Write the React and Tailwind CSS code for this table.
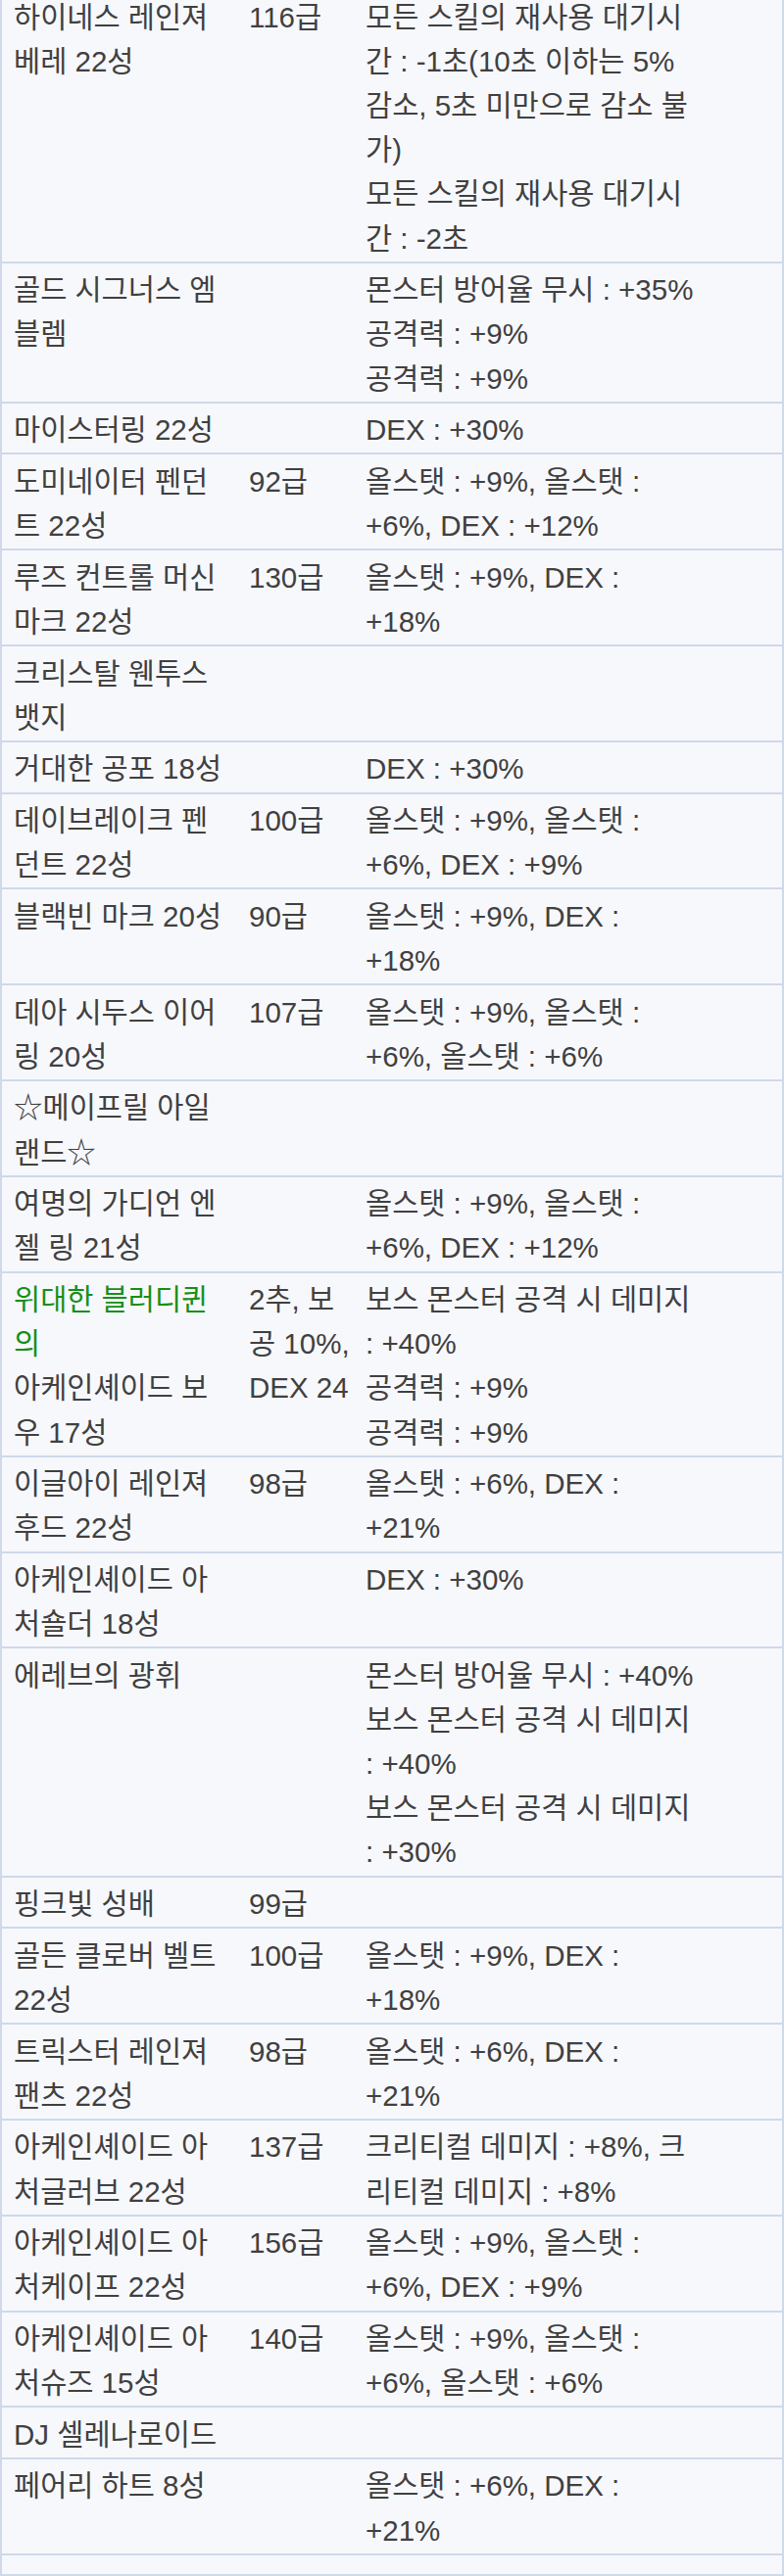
import React from 'react';

// 장비 목록: 이름 / 추옵(급) / 잠재·에디 옵션 (줄 단위)
const items = [
  {
    name: ['하이네스 레인져', '베레 22성'],
    grade: ['116급'],
    opts: ['모든 스킬의 재사용 대기시', '간 : -1초(10초 이하는 5%', '감소, 5초 미만으로 감소 불', '가)', '모든 스킬의 재사용 대기시', '간 : -2초'],
  },
  { name: ['골드 시그너스 엠', '블렘'], opts: ['몬스터 방어율 무시 : +35%', '공격력 : +9%', '공격력 : +9%'] },
  { name: ['마이스터링 22성'], opts: ['DEX : +30%'] },
  { name: ['도미네이터 펜던', '트 22성'], grade: ['92급'], opts: ['올스탯 : +9%, 올스탯 :', '+6%, DEX : +12%'] },
  { name: ['루즈 컨트롤 머신', '마크 22성'], grade: ['130급'], opts: ['올스탯 : +9%, DEX :', '+18%'] },
  { name: ['크리스탈 웬투스', '뱃지'] },
  { name: ['거대한 공포 18성'], opts: ['DEX : +30%'] },
  { name: ['데이브레이크 펜', '던트 22성'], grade: ['100급'], opts: ['올스탯 : +9%, 올스탯 :', '+6%, DEX : +9%'] },
  { name: ['블랙빈 마크 20성'], grade: ['90급'], opts: ['올스탯 : +9%, DEX :', '+18%'] },
  { name: ['데아 시두스 이어', '링 20성'], grade: ['107급'], opts: ['올스탯 : +9%, 올스탯 :', '+6%, 올스탯 : +6%'] },
  { name: ['☆메이프릴 아일', '랜드☆'] },
  { name: ['여명의 가디언 엔', '젤 링 21성'], opts: ['올스탯 : +9%, 올스탯 :', '+6%, DEX : +12%'] },
  {
    name: ['위대한 블러디퀸', '의', '아케인셰이드 보', '우 17성'],
    green: 2,
    grade: ['2추, 보', '공 10%,', 'DEX 24'],
    opts: ['보스 몬스터 공격 시 데미지', ': +40%', '공격력 : +9%', '공격력 : +9%'],
  },
  { name: ['이글아이 레인져', '후드 22성'], grade: ['98급'], opts: ['올스탯 : +6%, DEX :', '+21%'] },
  { name: ['아케인셰이드 아', '처숄더 18성'], opts: ['DEX : +30%'] },
  {
    name: ['에레브의 광휘'],
    opts: ['몬스터 방어율 무시 : +40%', '보스 몬스터 공격 시 데미지', ': +40%', '보스 몬스터 공격 시 데미지', ': +30%'],
  },
  { name: ['핑크빛 성배'], grade: ['99급'] },
  { name: ['골든 클로버 벨트', '22성'], grade: ['100급'], opts: ['올스탯 : +9%, DEX :', '+18%'] },
  { name: ['트릭스터 레인져', '팬츠 22성'], grade: ['98급'], opts: ['올스탯 : +6%, DEX :', '+21%'] },
  { name: ['아케인셰이드 아', '처글러브 22성'], grade: ['137급'], opts: ['크리티컬 데미지 : +8%, 크', '리티컬 데미지 : +8%'] },
  { name: ['아케인셰이드 아', '처케이프 22성'], grade: ['156급'], opts: ['올스탯 : +9%, 올스탯 :', '+6%, DEX : +9%'] },
  { name: ['아케인셰이드 아', '처슈즈 15성'], grade: ['140급'], opts: ['올스탯 : +9%, 올스탯 :', '+6%, 올스탯 : +6%'] },
  { name: ['DJ 셀레나로이드'] },
  { name: ['페어리 하트 8성'], opts: ['올스탯 : +6%, DEX :', '+21%'] },
];

// first: 화면 맨 위에서 잘려 보이는 첫 행 (윗부분 여백 없음)
const Lines = ({ lines = [], green = 0, first = false }) => (
  <div className={`pl-3 pb-[1px] whitespace-nowrap ${first ? 'pt-0' : 'pt-[4.5px]'}`}>
    {lines.map((line, i) => (
      <div
        key={i}
        className={`${i < green ? 'text-[#168f16]' : ''} ${first && i === 0 ? 'leading-[35px] mb-[5px]' : ''}`}
      >
        {line}
      </div>
    ))}
  </div>
);

export default function App() {
  return (
    <div className="w-[800px] h-[2630px] overflow-hidden bg-[#f7f8fc]">
      <div className="border-x-2 border-[#cfd9ea] bg-[#f7f8fc] text-[#404040] text-[29.5px] leading-[45.15px] font-['Liberation_Sans','Noto_Sans_CJK_KR',sans-serif]">
        {items.map((item, idx) => (
          <div key={idx} className="grid grid-cols-[240px_119px_1fr] border-b-2 border-[#cfd9ea]">
            <Lines lines={item.name} green={item.green} first={idx === 0} />
            <Lines lines={item.grade} first={idx === 0} />
            <Lines lines={item.opts} first={idx === 0} />
          </div>
        ))}
        <div className="h-[21px] border-b-2 border-[#cfd9ea]" />
      </div>
    </div>
  );
}
